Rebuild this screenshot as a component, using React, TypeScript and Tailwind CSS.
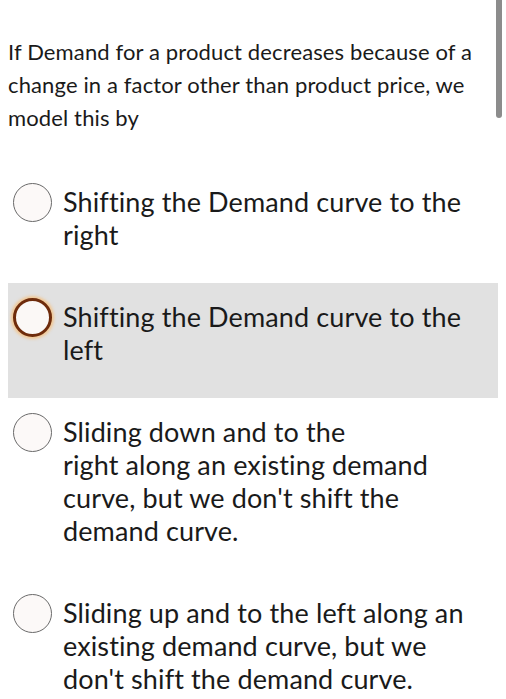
const options = [
  { id: 1, lines: ['Shifting the Demand curve to the right'], focused: false },
  { id: 2, lines: ['Shifting the Demand curve to the left'], focused: true },
  {
    id: 3,
    lines: ['Sliding down and to the', "right along an existing demand curve, but we don't shift the demand curve."],
    focused: false,
  },
  {
    id: 4,
    lines: ["Sliding up and to the left along an existing demand curve, but we don't shift the demand curve."],
    focused: false,
  },
];

function Radio({ focused }: { focused: boolean }) {
  if (focused) {
    return (
      <span className="mt-[-2px] h-[39px] w-[39px] shrink-0 rounded-full border-[3px] border-[#6e2c0c] bg-[#fbf8f6] shadow-[0_0_3px_2px_rgba(255,176,80,0.55)]" />
    );
  }
  return <span className="mt-[-2px] h-[39px] w-[39px] shrink-0 rounded-full border-[1.5px] border-[#6a6a6a] bg-[#fcf9f8]" />;
}

export default function App() {
  return (
    <div className="relative h-[699px] w-[506px] overflow-hidden bg-white font-['Lato',sans-serif] text-[#1a1a1a]">
      <div className="absolute right-[4px] top-0 h-[118px] w-[6px] rounded-b-full bg-[#8c8c8c]" />
      <p className="pl-[8px] pr-[24px] pt-[35px] text-[22px] leading-[33px] tracking-[0.13px]">
        If Demand for a product decreases because of a change in a factor other than product price, we model this by
      </p>
      <div className="mt-[34px] flex flex-col">
        {options.map((o) => (
          <label
            key={o.id}
            className={`mx-[8px] flex gap-[11px] pb-[32px] pl-[5px] pr-[14px] pt-[17px] ${o.focused ? 'bg-[#e1e1e1]' : ''}`}
          >
            <Radio focused={o.focused} />
            <span className="text-[27px] leading-[33px] tracking-[0.12px]">
              {o.lines.map((l, i) => (
                <span key={i}>
                  {i > 0 && <br />}
                  {l}
                </span>
              ))}
            </span>
          </label>
        ))}
      </div>
    </div>
  );
}
